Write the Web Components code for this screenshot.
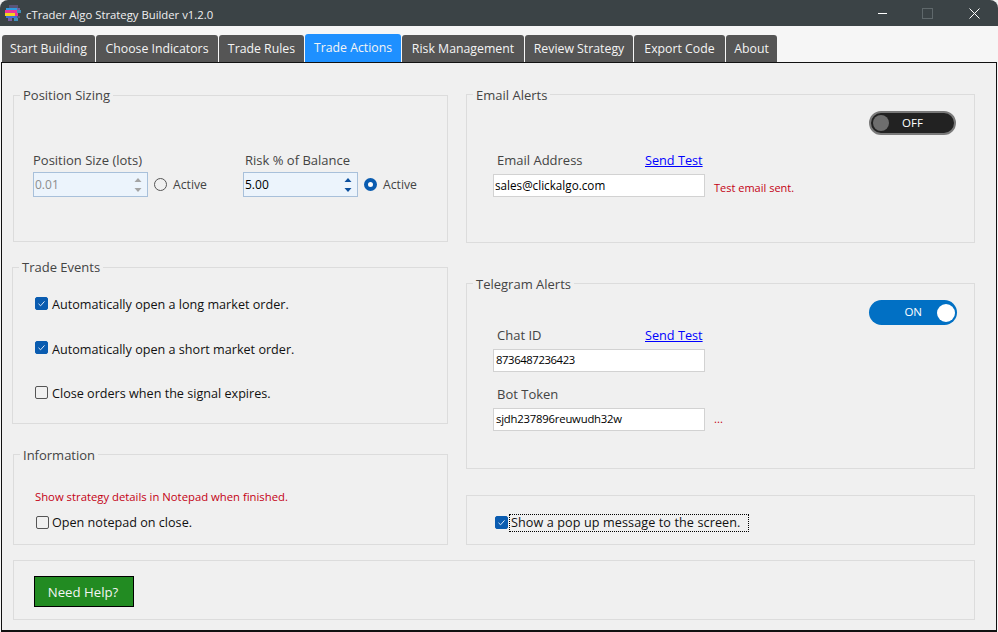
<!DOCTYPE html>
<html>
<head>
<meta charset="utf-8">
<title>cTrader Algo Strategy Builder</title>
<style>
  html, body { margin: 0; padding: 0; background: #f0f0f0; }
  body { width: 998px; height: 632px; overflow: hidden; font: 13px "Open Sans", "Noto Sans", sans-serif; }
</style>
</head>
<body>
<app-window></app-window>

<script>
const FONT = '"Open Sans", "Noto Sans", sans-serif';

class TitleBar extends HTMLElement {
    connectedCallback() {
        this.attachShadow({ mode: 'open' });
        this.shadowRoot.innerHTML = `
            <style>
                :host { display: flex; align-items: center; height: 26px; background: #3b4346; color: #f0f0f0; }
                .logo { margin: 0 5px 0 5px; display: block; }
                .name { font: 11.3px ${FONT}; flex: 1; position: relative; top: 1px; }
                .ctl { display: block; width: 46px; height: 26px; }
                .ctls { display: flex; margin-right: 1px; }
            </style>
            <svg class="logo" width="16" height="16" viewBox="0 0 16 16">
                <rect x="4" y="0" width="9" height="3" fill="#5a5478"/>
                <rect x="1" y="3" width="11" height="2" fill="#2f9ee0"/>
                <rect x="12" y="3" width="3" height="2" fill="#6f62a0"/>
                <rect x="0" y="5" width="12" height="3" fill="#e8359a"/>
                <rect x="12" y="5" width="4" height="3" fill="#3f8fb8"/>
                <rect x="0" y="8" width="10" height="3" fill="#f2d21f"/>
                <rect x="10" y="8" width="3" height="3" fill="#e8359a"/>
                <rect x="1" y="11" width="11" height="2" fill="#3c6fd8"/>
                <rect x="12" y="11" width="3" height="2" fill="#5a5478"/>
                <rect x="3" y="13" width="4" height="3" fill="#7a5ea0"/>
                <rect x="9" y="13" width="4" height="3" fill="#3f8fb8"/>
            </svg>
            <span class="name"><slot></slot></span>
            <div class="ctls">
                <svg class="ctl" viewBox="0 0 46 26"><path d="M19 13.5H28" stroke="#fff" stroke-width="1"/></svg>
                <svg class="ctl" viewBox="0 0 46 26"><rect x="17.5" y="8.5" width="10" height="10" fill="none" stroke="#5f686b"/></svg>
                <svg class="ctl" viewBox="0 0 46 26"><path d="M18.5 8.5L28.5 18.5M28.5 8.5L18.5 18.5" stroke="#fff" stroke-width="1"/></svg>
            </div>
        `;
    }
}

class TabItem extends HTMLElement {
    connectedCallback() {
        this.attachShadow({ mode: 'open' });
        this.shadowRoot.innerHTML = `
            <style>
                :host {
                    display: flex; align-items: center; justify-content: center; box-sizing: border-box;
                    height: 27px; padding-bottom: 1px; background: #555; color: #f4f4f4; border-radius: 3px 3px 0 0;
                    font: 12.3px ${FONT}; white-space: nowrap;
                }
                :host([active]) { background: #1e90ff; height: 28px; }
            </style>
            <slot></slot>
        `;
    }
}

class GroupBox extends HTMLElement {
    connectedCallback() {
        this.attachShadow({ mode: 'open' });
        const heading = this.getAttribute('heading');
        this.shadowRoot.innerHTML = `
            <style>
                :host { display: block; box-sizing: border-box; border: 1px solid #dcdcdc; position: relative; }
                .legend {
                    position: absolute; left: 6px; top: var(--legend-top, -10px); padding: 0 3px; background: #f0f0f0;
                    color: #444; font: 13px/18px ${FONT};
                }
            </style>
            ${heading ? `<div class="legend">${heading}</div>` : ''}
            <slot></slot>
        `;
    }
}

class SpinInput extends HTMLElement {
    connectedCallback() {
        this.attachShadow({ mode: 'open' });
        this.shadowRoot.innerHTML = `
            <style>
                :host {
                    display: flex; align-items: center; justify-content: space-between; box-sizing: border-box;
                    width: 115px; height: 25px; padding: 0 5px 0 1px;
                    background: #ecf4fc; border: 1px solid #a8c0da; color: #000; font: 12px ${FONT};
                }
                :host([disabled]) { color: #8c8c8c; }
                svg { display: block; fill: #0b4f9e; }
                :host([disabled]) svg { fill: #a4a4a4; }
            </style>
            <slot></slot>
            <svg width="8" height="16" viewBox="0 0 8 16"><path d="M4 1L7.5 5H.5ZM4 15L.5 11H7.5Z"/></svg>
        `;
    }
}

class RadioOption extends HTMLElement {
    connectedCallback() {
        this.attachShadow({ mode: 'open' });
        this.shadowRoot.innerHTML = `
            <style>
                :host { display: inline-flex; align-items: center; gap: 6px; color: #444; font: 12.2px ${FONT}; }
                .dot { box-sizing: border-box; width: 13px; height: 13px; border-radius: 50%; border: 1px solid #555; }
                :host([checked]) .dot { border: 4px solid #0a5cb0; background: #fff; }
            </style>
            <span class="dot"></span><slot></slot>
        `;
    }
}

class CheckOption extends HTMLElement {
    connectedCallback() {
        this.attachShadow({ mode: 'open' });
        this.shadowRoot.innerHTML = `
            <style>
                :host { display: flex; align-items: center; gap: 4px; color: #111; font: 12.62px/16px ${FONT}; }
                .box {
                    box-sizing: border-box; width: 13px; height: 13px; border: 1px solid #555; border-radius: 2px;
                    display: flex; align-items: center; justify-content: center; flex: none;
                    position: relative; top: var(--box-shift, -1px);
                }
                :host([checked]) .box { background: #0a5cb0; border-color: #0a5cb0; }
                svg { display: none; }
                :host([checked]) svg { display: block; }
                :host([focused]) { gap: 2px; }
                :host([focused]) .label { outline: 1px dotted #000; padding: 0 2px 0 1px; width: 235px; letter-spacing: 0.1px; }
            </style>
            <span class="box">
                <svg width="9" height="9" viewBox="0 0 9 9"><path d="M1.5 4.8L3.6 6.8L7.5 2.4" fill="none" stroke="#dbe9f8" stroke-width="1"/></svg>
            </span>
            <span class="label"><slot></slot></span>
        `;
    }
}

class TextField extends HTMLElement {
    connectedCallback() {
        this.attachShadow({ mode: 'open' });
        this.shadowRoot.innerHTML = `
            <style>
                :host {
                    display: flex; align-items: center; box-sizing: border-box;
                    width: 212px; height: 23px; padding: 0 1px 2px 1px;
                    background: #fff; border: 1px solid #d2d2d2; color: #000; font: 11.7px ${FONT};
                }
            </style>
            <slot></slot>
        `;
    }
}

class ToggleSwitch extends HTMLElement {
    connectedCallback() {
        this.attachShadow({ mode: 'open' });
        const on = this.hasAttribute('on');
        this.shadowRoot.innerHTML = `
            <style>
                :host {
                    display: flex; align-items: center; box-sizing: border-box; width: 87px; height: 24px;
                    border-radius: 12px; color: #fff; font: 11.5px ${FONT};
                    background: #222; border: 2px solid #7a7a7a; padding: 0 2px;
                }
                :host([on]) { width: 88px; height: 25px; border-radius: 13px; background: #0170c4; border: 0; padding: 0 2px 0 0; justify-content: flex-end; }
                .knob { width: 16px; height: 16px; border-radius: 50%; background: #6e6e6e; flex: none; }
                :host([on]) .knob { width: 18px; height: 18px; background: #fff; }
                .text { margin: 0 0 2px 13px; }
                :host([on]) .text { margin: 0 15px 2px 0; }
            </style>
            ${on ? '<span class="text">ON</span><span class="knob"></span>'
                 : '<span class="knob"></span><span class="text">OFF</span>'}
        `;
    }
}

class ActionsPanel extends HTMLElement {
    connectedCallback() {
        this.attachShadow({ mode: 'open' });
        this.shadowRoot.innerHTML = `
            <style>
                :host {
                    display: block; box-sizing: border-box; height: 570px; margin-left: 1px; margin-right: 1px;
                    border: solid #111; border-width: 1px 1px 2px 1px; padding: 32px 0 0 11px; background: #f0f0f0;
                    color: #444; font: 13px ${FONT};
                }
                .cols { display: grid; grid-template-columns: 435px 509px; column-gap: 18px; }
                .col { display: flex; flex-direction: column; }
                .sizing { height: 147px; padding: 56px 0 0 19px; display: flex; }
                .field { display: flex; flex-direction: column; gap: 3px; }
                .field.first { width: 210px; }
                .field .cap { line-height: 17px; }
                .field.second .cap { margin-left: 2px; }
                .inline { display: flex; align-items: center; gap: 6px; }
                .events { height: 157px; margin: 25px 0 0 -1px; width: 436px; padding: 29px 0 0 22px; display: flex; flex-direction: column; gap: 28.5px; --box-shift: -2px; }
                .info { height: 91px; margin-top: 30px; padding: 34px 0 0 21px; --legend-top: -9px; }
                .warn { color: #c40014; font-size: 11.3px; line-height: 16px; }
                .info check-option { margin: 10px 0 0 1px; gap: 3px; }
                .email { height: 149px; margin-top: -1px; padding: 16px 18px 0 26px; --legend-top: -9px; }
                .telegram { height: 186px; margin-top: 40px; padding: 16px 17px 0 26px; --legend-top: -9px; }
                .sw { display: flex; justify-content: flex-end; }
                .cap-row { display: flex; width: 212px; line-height: 17px; padding-left: 4px; box-sizing: border-box; }
                .cap-row span { width: 148px; flex: none; }
                a { color: #0000ff; text-decoration: underline; font-size: 12.7px; }
                .entry { display: flex; align-items: center; gap: 9px; }
                .email .cap-row { margin-top: 17px; }
                .email .entry { margin-top: 5px; }
                .email .warn { position: relative; top: 2px; font-size: 11px; }
                .telegram .cap-row { margin-top: 2px; }
                .telegram .entry { margin-top: 5px; }
                .telegram .cap-row.token { margin-top: 14px; }
                .telegram .warn { position: relative; top: -1px; }
                .digits { font-size: 11.3px; letter-spacing: -0.4px; padding-left: 2px; }
                .token-text { font-size: 11.3px; letter-spacing: -0.2px; padding-left: 2px; }
                .popup { height: 50px; margin-top: 26px; padding: 19px 0 0 28px; }
                .help { margin-top: 15px; height: 60px; width: 962px; padding: 15px 0 0 20px; }
                .btn {
                    display: flex; align-items: center; justify-content: center; box-sizing: border-box;
                    width: 100px; height: 31px; padding-right: 2px; background: #228b22; border: 1px solid #000; color: #f4f4f4;
                    font: 13.2px ${FONT};
                }
            </style>
            <div class="cols">
                <div class="col">
                    <group-box class="sizing" heading="Position Sizing">
                        <div class="field first">
                            <span class="cap">Position Size (lots)</span>
                            <div class="inline">
                                <spin-input disabled>0.01</spin-input>
                                <radio-option>Active</radio-option>
                            </div>
                        </div>
                        <div class="field second">
                            <span class="cap">Risk % of Balance</span>
                            <div class="inline">
                                <spin-input>5.00</spin-input>
                                <radio-option checked>Active</radio-option>
                            </div>
                        </div>
                    </group-box>
                    <group-box class="events" heading="Trade Events">
                        <check-option checked>Automatically open a long market order.</check-option>
                        <check-option checked>Automatically open a short market order.</check-option>
                        <check-option>Close orders when the signal expires.</check-option>
                    </group-box>
                    <group-box class="info" heading="Information">
                        <div class="warn">Show strategy details in Notepad when finished.</div>
                        <check-option>Open notepad on close.</check-option>
                    </group-box>
                </div>
                <div class="col">
                    <group-box class="email" heading="Email Alerts">
                        <div class="sw"><toggle-switch></toggle-switch></div>
                        <div class="cap-row"><span>Email Address</span><a href="#">Send Test</a></div>
                        <div class="entry">
                            <text-field>sales@clickalgo.com</text-field>
                            <span class="warn">Test email sent.</span>
                        </div>
                    </group-box>
                    <group-box class="telegram" heading="Telegram Alerts">
                        <div class="sw"><toggle-switch on></toggle-switch></div>
                        <div class="cap-row"><span>Chat ID</span><a href="#">Send Test</a></div>
                        <div class="entry"><text-field class="digits">8736487236423</text-field></div>
                        <div class="cap-row token"><span>Bot Token</span></div>
                        <div class="entry">
                            <text-field class="token-text">sjdh237896reuwudh32w</text-field>
                            <span class="warn">...</span>
                        </div>
                    </group-box>
                    <group-box class="popup">
                        <check-option checked focused>Show a pop up message to the screen.</check-option>
                    </group-box>
                </div>
            </div>
            <group-box class="help"><div class="btn">Need Help?</div></group-box>
        `;
    }
}

class AppWindow extends HTMLElement {
    connectedCallback() {
        this.attachShadow({ mode: 'open' });
        this.shadowRoot.innerHTML = `
            <style>
                :host { display: block; width: 998px; height: 632px; background: #f6f6f6; border-radius: 8px 8px 0 0; overflow: hidden; }
                .tabs { display: flex; align-items: flex-end; gap: 1px; height: 36px; padding-left: 2px; box-sizing: border-box; background: #f6f6f6; }
            </style>
            <title-bar>cTrader Algo Strategy Builder v1.2.0</title-bar>
            <div class="tabs">
                <tab-item style="width:93px">Start Building</tab-item>
                <tab-item style="width:122px">Choose Indicators</tab-item>
                <tab-item style="width:85px">Trade Rules</tab-item>
                <tab-item style="width:96px" active>Trade Actions</tab-item>
                <tab-item style="width:122px">Risk Management</tab-item>
                <tab-item style="width:108px">Review Strategy</tab-item>
                <tab-item style="width:91px">Export Code</tab-item>
                <tab-item style="width:51px">About</tab-item>
            </div>
            <actions-panel></actions-panel>
        `;
    }
}

customElements.define('title-bar', TitleBar);
customElements.define('tab-item', TabItem);
customElements.define('group-box', GroupBox);
customElements.define('spin-input', SpinInput);
customElements.define('radio-option', RadioOption);
customElements.define('check-option', CheckOption);
customElements.define('text-field', TextField);
customElements.define('toggle-switch', ToggleSwitch);
customElements.define('actions-panel', ActionsPanel);
customElements.define('app-window', AppWindow);
</script>
</body>
</html>
